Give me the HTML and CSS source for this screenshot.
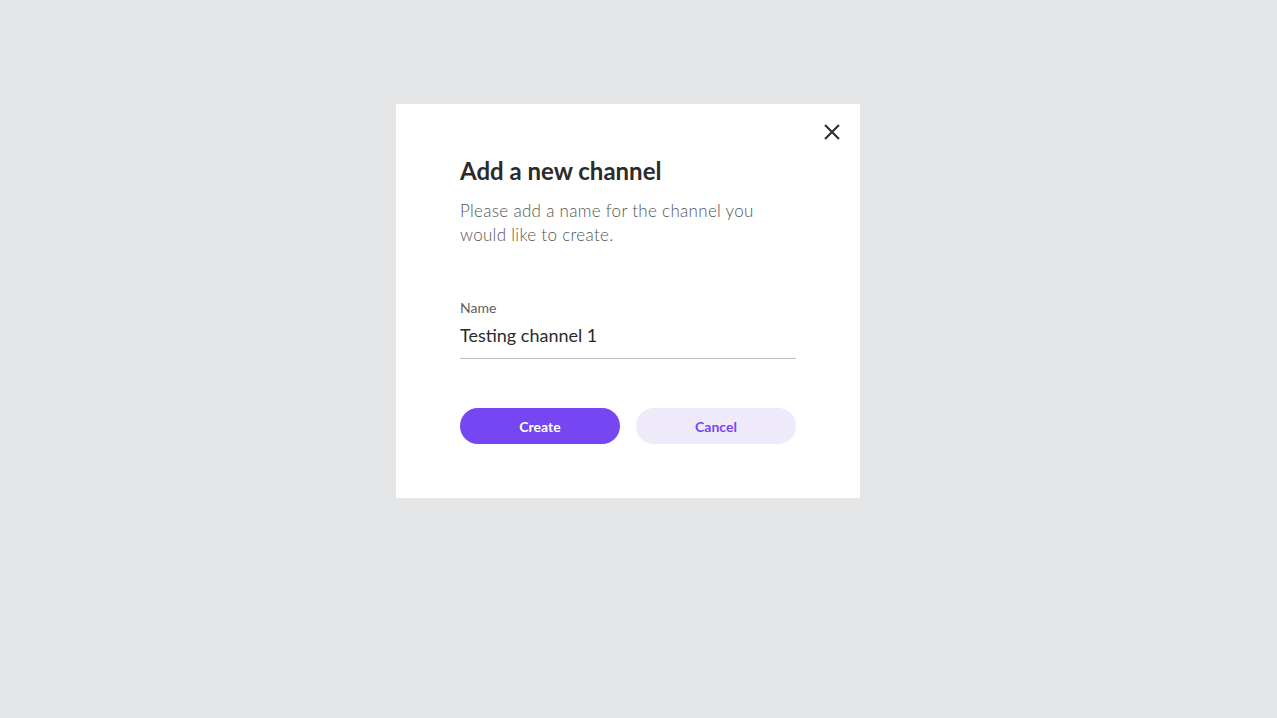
FILE: index.html
```html
<!DOCTYPE html>
<html>
<head>
<meta charset="utf-8">
<link rel="stylesheet" href="styles.css">
</head>
<body>
<div class="overlay">
  <div class="modal">
    <button class="close" aria-label="Close">
      <svg width="18" height="18" viewBox="0 0 18 18"><path d="M2 2 L16 16 M16 2 L2 16" stroke="#2b2b2b" stroke-width="2" fill="none"/></svg>
    </button>
    <h1 class="title">Add a new channel</h1>
    <p class="desc">Please add a name for the channel you would like to create.</p>
    <div class="field">
      <label class="label">Name</label>
      <div class="input">Testing channel 1</div>
    </div>
    <div class="actions">
      <button class="btn primary">Create</button>
      <button class="btn secondary">Cancel</button>
    </div>
  </div>
</div>
</body>
</html>
```
FILE: styles.css
```css
html, body { margin: 0; padding: 0; }
body {
  background: #e4e5e7;
  font-family: "Lato", "Noto Sans", sans-serif;
  color: #2b2b2b;
}
.overlay {
  height: 718px;
  display: flex;
  justify-content: center;
  align-items: flex-start;
  padding-top: 104px;
  box-sizing: border-box;
}
.modal {
  position: relative;
  width: 464px;
  height: 394px;
  box-sizing: border-box;
  background: #fff;
  padding: 53px 64px 0 64px;
  margin-right: 21px;
}
.close {
  position: absolute;
  top: 19px;
  right: 19px;
  background: none;
  border: 0;
  padding: 0;
  width: 18px;
  height: 18px;
  cursor: pointer;
}
.title {
  margin: 0;
  font-size: 24px;
  font-weight: 700;
  line-height: 28px;
  letter-spacing: 0;
  color: #2b2b2b;
}
.desc {
  margin: 14px 0 0;
  font-size: 17px;
  font-weight: 300;
  line-height: 24px;
  letter-spacing: 0.3px;
  color: #555;
  width: 320px;
}
.field {
  margin-top: 52px;
  width: 336px;
}
.label {
  display: block;
  font-size: 14px;
  font-weight: 400;
  line-height: 18px;
  color: #5e5e5e;
}
.input {
  margin-top: 6px;
  font-size: 18px;
  line-height: 24px;
  padding-bottom: 11px;
  border-bottom: 1px solid #bdbdbd;
  color: #2b2b2b;
}
.actions {
  margin-top: 49px;
  display: flex;
  gap: 16px;
}
.btn {
  width: 160px;
  height: 36px;
  border: 0;
  border-radius: 18px;
  font-family: inherit;
  font-size: 14px;
  font-weight: 700;
  cursor: pointer;
}
.primary { background: #7546f2; color: #fff; }
.secondary { background: #eeeafa; color: #7546f2; }
```
